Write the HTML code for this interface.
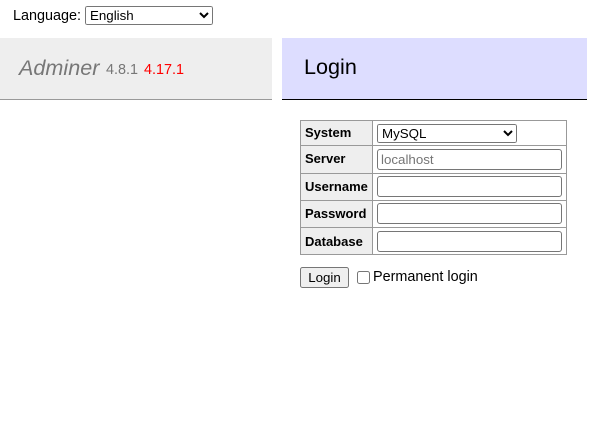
<!DOCTYPE html>
<html lang="en">
<head>
<meta charset="utf-8">
<title>Login - Adminer</title>
<style>
html,body{margin:0;padding:0;background:#fff;}
body{position:relative;width:610px;height:438px;font:14.4px/18px "Liberation Sans",sans-serif;color:#000;}
.a{position:absolute;white-space:nowrap;}
select,input,button{position:absolute;box-sizing:border-box;margin:0;font:13.33px "Liberation Sans",sans-serif;}
input[type=text]{padding:1px 3px;border:1px solid #767676;border-radius:3px;background:#fff;color:#000;}
input::placeholder{color:#757575;opacity:1;}
.b{position:absolute;background:#999;}
.th{position:absolute;left:301px;width:71px;background:#eee;}
.l{position:absolute;left:305px;font:bold 13px/16px "Liberation Sans",sans-serif;}
</style>
</head>
<body>
<div class="a" style="left:13px;top:7px;">Language:</div>
<select style="left:85px;top:6px;width:128px;height:19px;"><option>English</option></select>

<div class="a" style="left:0;top:38px;width:272px;height:61px;background:#eee;border-bottom:1px solid #999;"></div>
<div class="a" style="left:19px;top:53px;font:italic 21.6px/29px 'Liberation Sans',sans-serif;color:#777;">Adminer</div>
<div class="a" style="left:106px;top:61px;font:14.4px/18px 'Liberation Sans',sans-serif;color:#777;">4.8.1</div>
<div class="a" style="left:144px;top:61px;font:14.4px/18px 'Liberation Sans',sans-serif;color:#f00;">4.17.1</div>

<div class="a" style="left:282px;top:38px;width:305px;height:61px;background:#ddf;border-bottom:1px solid #000;"></div>
<div class="a" style="left:304px;top:53px;font:21.6px/28px 'Liberation Sans',sans-serif;">Login</div>

<div class="th" style="top:121px;height:133px;"></div>
<div class="b" style="left:300px;top:120px;width:267px;height:1px;"></div>
<div class="b" style="left:300px;top:145px;width:267px;height:1px;"></div>
<div class="b" style="left:300px;top:173px;width:267px;height:1px;"></div>
<div class="b" style="left:300px;top:200px;width:267px;height:1px;"></div>
<div class="b" style="left:300px;top:227px;width:267px;height:1px;"></div>
<div class="b" style="left:300px;top:254px;width:267px;height:1px;"></div>
<div class="b" style="left:300px;top:120px;width:1px;height:135px;"></div>
<div class="b" style="left:372px;top:120px;width:1px;height:135px;"></div>
<div class="b" style="left:566px;top:120px;width:1px;height:135px;"></div>

<div class="l" style="top:125px;">System</div>
<div class="l" style="top:151px;">Server</div>
<div class="l" style="top:179px;">Username</div>
<div class="l" style="top:206px;">Password</div>
<div class="l" style="top:234px;">Database</div>

<select style="left:377px;top:124px;width:140px;height:19px;"><option>MySQL</option></select>
<input type="text" placeholder="localhost" style="left:377px;top:149px;width:185px;height:21px;">
<input type="text" style="left:377px;top:176px;width:185px;height:21px;">
<input type="text" style="left:377px;top:203px;width:185px;height:21px;">
<input type="text" style="left:377px;top:231px;width:185px;height:21px;">

<button type="button" style="left:300px;top:267px;width:49px;height:21px;padding:1px 6px;">Login</button>
<input type="checkbox" style="left:357px;top:271px;width:13px;height:13px;">
<div class="a" style="left:373px;top:268px;">Permanent login</div>
</body>
</html>
